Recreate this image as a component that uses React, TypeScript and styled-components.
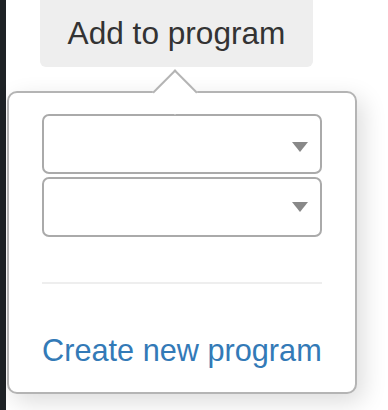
import styled, { createGlobalStyle } from 'styled-components';

const GlobalStyle = createGlobalStyle`
  body {
    margin: 0;
    background: #ffffff;
    font-family: "Liberation Sans", Arial, Helvetica, sans-serif;
  }
`;

const Page = styled.div`
  display: flex;
  height: 410px;
  overflow: hidden;
`;

const Sidebar = styled.div`
  width: 6px;
  flex-shrink: 0;
  background: #1e2226;
`;

const Content = styled.div`
  display: flex;
  flex-direction: column;
  padding-left: 1px;
`;

const TriggerButton = styled.button`
  margin: -10px 0 0 33px;
  width: 273px;
  height: 77px;
  padding: 10px 0 0;
  border: none;
  border-radius: 6px;
  background: #eeeeee;
  color: #333333;
  font-family: inherit;
  font-size: 31.6px;
  line-height: 67px;
  text-align: center;
  cursor: pointer;
`;

const Popover = styled.div`
  position: relative;
  margin-top: 24px;
  width: 350px;
  box-sizing: border-box;
  padding: 21px 33px 23px;
  border: 2px solid #b4b4b4;
  border-radius: 10px;
  background: #ffffff;
  box-shadow: 6px 8px 24px rgba(0, 0, 0, 0.14);
  display: flex;
  flex-direction: column;

  &::before {
    content: '';
    position: absolute;
    top: -17px;
    left: 150px;
    width: 32px;
    height: 32px;
    background: #ffffff;
    border-top: 2px solid #b4b4b4;
    border-left: 2px solid #b4b4b4;
    box-sizing: border-box;
    transform: rotate(45deg);
  }
`;

const Selects = styled.div`
  display: flex;
  flex-direction: column;
  gap: 3px;
`;

const SelectBox = styled.div<{ $nudge?: number }>`
  height: 60px;
  box-sizing: border-box;
  border: 2px solid #aaaaaa;
  border-radius: 7px;
  display: flex;
  align-items: center;
  justify-content: flex-end;
  padding: ${(p) => p.$nudge ?? 0}px 12px 0 0;
  cursor: pointer;
`;

const Caret = styled.span`
  width: 0;
  height: 0;
  border-left: 8.5px solid transparent;
  border-right: 8.5px solid transparent;
  border-top: 10px solid #888888;
`;

const Divider = styled.hr`
  margin: 45px 0 0;
  border: none;
  height: 2px;
  background: #eeeeee;
`;

const CreateLink = styled.a`
  margin-top: 49px;
  color: #337ab7;
  font-size: 30.7px;
  line-height: 36px;
  text-decoration: none;
  white-space: nowrap;
  cursor: pointer;
`;

export default function App() {
  return (
    <Page>
      <GlobalStyle />
      <Sidebar />
      <Content>
        <TriggerButton>Add to program</TriggerButton>
        <Popover>
          <Selects>
            <SelectBox $nudge={6}>
              <Caret />
            </SelectBox>
            <SelectBox>
              <Caret />
            </SelectBox>
          </Selects>
          <Divider />
          <CreateLink>Create new program</CreateLink>
        </Popover>
      </Content>
    </Page>
  );
}
